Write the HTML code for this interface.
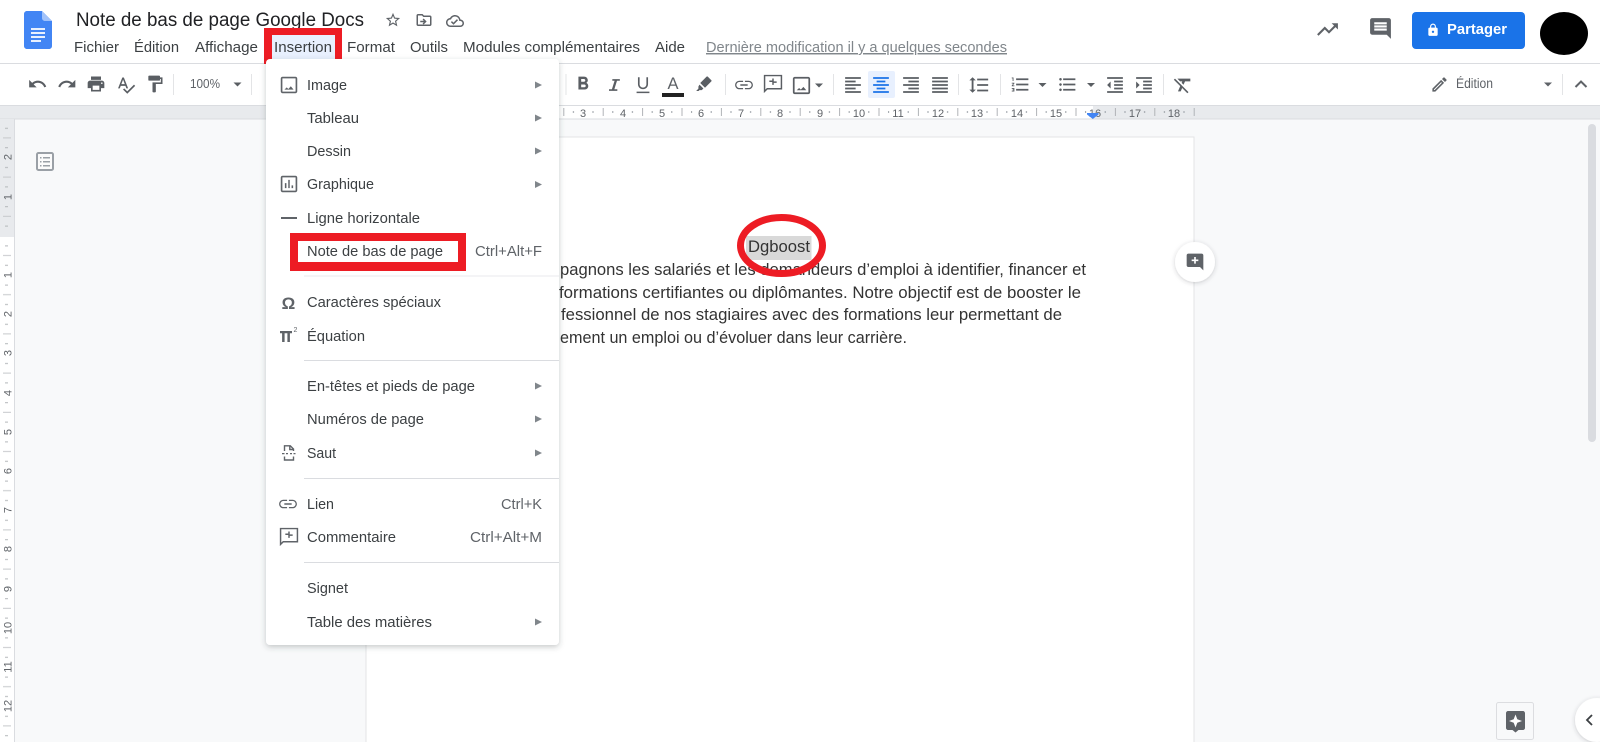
<!DOCTYPE html>
<html lang="fr">
<head>
<meta charset="utf-8">
<title>Note de bas de page Google Docs</title>
<style>
html,body{margin:0;padding:0;width:1600px;height:742px;overflow:hidden;background:#f8f9fa}
svg{display:block;position:absolute;left:0;top:0}
text{font-family:"Liberation Sans",sans-serif}
.m{font-size:14.6px;fill:#3c4043}
.i{font-size:15px;fill:#3c4043}
.s{font-size:14.6px;fill:#5f6368}
.d{font-size:16.6px;fill:#333}
.r{font-size:11px;fill:#5f6368;text-anchor:middle}
.g{fill:#5f6368}
.t{fill:#5a5e63}
</style>
</head>
<body>
<svg width="1600" height="742" viewBox="0 0 1600 742" xmlns="http://www.w3.org/2000/svg">
<defs>
<filter id="sh" x="-10%" y="-10%" width="120%" height="120%"><feDropShadow dx="0" dy="2" stdDeviation="3" flood-color="#3c4043" flood-opacity=".28"/></filter>
<filter id="sh2" x="-30%" y="-30%" width="160%" height="160%"><feDropShadow dx="0" dy="1" stdDeviation="2" flood-color="#3c4043" flood-opacity=".25"/></filter>
<pattern id="rh" x="563.3" y="105" width="39.4" height="14" patternUnits="userSpaceOnUse">
<rect x="0" y="3" width="1" height="8" fill="#b0b3b7"/><rect x="9.6" y="6" width="1" height="2" fill="#9aa0a6"/><rect x="29.2" y="6" width="1" height="2" fill="#9aa0a6"/>
</pattern>
<pattern id="rv" x="0" y="275" width="14" height="39.2" patternUnits="userSpaceOnUse">
<rect x="5" y="9.6" width="3" height="1" fill="#b4b7ba"/><rect x="3" y="19.2" width="8" height="1" fill="#c6c8cb"/><rect x="5" y="29" width="3" height="1" fill="#b4b7ba"/>
</pattern>
<symbol id="undo" viewBox="0 0 24 24"><path d="M12.5 8c-2.65 0-5.05.99-6.9 2.6L2 7v9h9l-3.62-3.62c1.39-1.16 3.16-1.88 5.12-1.88 3.54 0 6.55 2.31 7.6 5.5l2.37-.78C21.08 11.03 17.15 8 12.5 8z"/></symbol>
<symbol id="redo" viewBox="0 0 24 24"><path d="M18.4 10.6C16.55 8.99 14.15 8 11.5 8c-4.65 0-8.58 3.03-9.96 7.22L3.9 16c1.05-3.19 4.05-5.5 7.6-5.5 1.95 0 3.73.72 5.12 1.88L13 16h9V7l-3.6 3.6z"/></symbol>
<symbol id="print" viewBox="0 0 24 24"><path d="M19 8H5c-1.66 0-3 1.34-3 3v6h4v4h12v-4h4v-6c0-1.66-1.34-3-3-3zm-3 11H8v-5h8v5zm3-7c-.55 0-1-.45-1-1s.45-1 1-1 1 .45 1 1-.45 1-1 1zm-1-9H6v4h12V3z"/></symbol>
<symbol id="spell" viewBox="0 0 24 24"><path d="M12.45 16h2.09L9.43 3H7.57L2.46 16h2.09l1.12-3h5.64l1.14 3zm-6.02-5L8.5 5.48 10.57 11H6.43zm15.16.59l-8.09 8.09L9.83 16l-1.41 1.41 5.09 5.09L23 13l-1.41-1.41z"/></symbol>
<symbol id="paint" viewBox="0 0 24 24"><path d="M18 4V3c0-.55-.45-1-1-1H5c-.55 0-1 .45-1 1v4c0 .55.45 1 1 1h12c.55 0 1-.45 1-1V6h1v4H9v11c0 .55.45 1 1 1h2c.55 0 1-.45 1-1v-9h8V4h-3z"/></symbol>
<symbol id="bold" viewBox="0 0 24 24"><path d="M15.6 10.79c.97-.67 1.65-1.77 1.65-2.79 0-2.26-1.75-4-4-4H7v14h7.04c2.09 0 3.71-1.7 3.71-3.79 0-1.52-.86-2.82-2.15-3.42zM10 6.5h3c.83 0 1.5.67 1.5 1.5s-.67 1.5-1.5 1.5h-3v-3zm3.5 9H10v-3h3.5c.83 0 1.5.67 1.5 1.5s-.67 1.500-1.500 1.500z"/></symbol>
<symbol id="ital" viewBox="0 0 24 24"><path d="M10 5h9v1.900h-3.400l-3.200 10.200H16V19H6v-1.900h3.500l3.200-10.200H10z"/></symbol>
<symbol id="under" viewBox="0 0 24 24"><path d="M12 16.500c3.100 0 5.500-2.300 5.500-5.500V3.500h-1.800V11c0 2.200-1.600 3.800-3.700 3.800S8.300 13.200 8.300 11V3.500H6.500V11c0 3.200 2.400 5.500 5.500 5.500zM5 19.200v1.600h14v-1.600H5z"/></symbol>
<symbol id="link" viewBox="0 0 24 24"><path d="M3.700 12c0-1.800 1.500-3.300 3.300-3.300h4V7.300H7c-2.700 0-4.700 2.100-4.700 4.700s2 4.700 4.700 4.700h4v-1.400H7c-1.800 0-3.300-1.500-3.300-3.300zM8 12.800h8v-1.600H8v1.600zm9-5.500h-4v1.400h4c1.800 0 3.300 1.500 3.300 3.300s-1.500 3.300-3.300 3.300h-4v1.400h4c2.700 0 4.700-2.100 4.700-4.700s-2-4.700-4.700-4.700z"/></symbol>
<symbol id="addc" viewBox="0 0 24 24"><path d="M2 2h20v16H6l-4 4V2zm1.600 1.600v14.500L5.400 16.400h15V3.600H3.600zm7.600 2.400h1.600v3.200H16v1.600h-3.200V13h-1.600V9.800H8V8.200h3.200V6z"/></symbol>
<symbol id="img" viewBox="0 0 24 24"><path d="M5 3h14c1.100 0 2 .9 2 2v14c0 1.100-.9 2-2 2H5c-1.100 0-2-.9-2-2V5c0-1.100.9-2 2-2zm0 1.800c-.1 0-.2.1-.2.2v14c0 .1.1.2.2.2h14c.1 0 .2-.1.2-.2V5c0-.1-.1-.2-.2-.2H5zm9 8.600l-2.700 2.900-1.800-1.700L7 17h10l-3-3.600z"/></symbol>
<symbol id="chart" viewBox="0 0 24 24"><path d="M5 3h14c1.100 0 2 .9 2 2v14c0 1.100-.9 2-2 2H5c-1.100 0-2-.9-2-2V5c0-1.100.9-2 2-2zm0 1.800c-.1 0-.2.1-.2.2v14c0 .1.1.2.2.2h14c.1 0 .2-.1.2-.2V5c0-.1-.1-.2-.2-.2H5zM7.500 11h1.700v5.500H7.500V11zm3.700-3.500h1.600v9h-1.600v-9zm3.600 6h1.700v3h-1.700v-3z"/></symbol>
<symbol id="al" viewBox="0 0 24 24"><path d="M15 15H3v2h12v-2zm0-8H3v2h12V7zM3 13h18v-2H3v2zm0 8h18v-2H3v2zM3 3v2h18V3H3z"/></symbol>
<symbol id="ac" viewBox="0 0 24 24"><path d="M7 15v2h10v-2H7zm-4 6h18v-2H3v2zm0-8h18v-2H3v2zm4-6v2h10V7H7zM3 3v2h18V3H3z"/></symbol>
<symbol id="ar" viewBox="0 0 24 24"><path d="M3 21h18v-2H3v2zm6-4h12v-2H9v2zm-6-4h18v-2H3v2zm6-4h12V7H9v2zM3 3v2h18V3H3z"/></symbol>
<symbol id="aj" viewBox="0 0 24 24"><path d="M3 21h18v-2H3v2zm0-4h18v-2H3v2zm0-4h18v-2H3v2zm0-4h18V7H3v2zm0-6v2h18V3H3z"/></symbol>
<symbol id="ls" viewBox="0 0 24 24"><path d="M6 7h2.500L5 3.500 1.500 7H4v10H1.500L5 20.500 8.500 17H6V7zm4-2v2h12V5H10zm0 14h12v-2H10v2zm0-6h12v-2H10v2z"/></symbol>
<symbol id="nl" viewBox="0 0 24 24"><path d="M2 17h2v.5H3v1h1v.5H2v1h3v-4H2v1zm1-9h1V4H2v1h1v3zm-1 3h1.800L2 13.100v.9h3v-1H3.200L5 10.900V10H2v1zm5-6v2h14V5H7zm0 14h14v-2H7v2zm0-6h14v-2H7v2z"/></symbol>
<symbol id="bl" viewBox="0 0 24 24"><path d="M4 10.500c-.83 0-1.500.67-1.500 1.500s.67 1.500 1.500 1.500 1.500-.67 1.500-1.500-.67-1.500-1.500-1.500zm0-6c-.83 0-1.500.67-1.500 1.500S3.170 7.500 4 7.500 5.500 6.830 5.500 6 4.830 4.500 4 4.500zm0 12c-.83 0-1.500.68-1.500 1.500s.68 1.500 1.500 1.500 1.500-.68 1.500-1.500-.67-1.500-1.500-1.500zM7 19h14v-2H7v2zm0-6h14v-2H7v2zm0-8v2h14V5H7z"/></symbol>
<symbol id="id" viewBox="0 0 24 24"><path d="M11 17h10v-2H11v2zm-8-5l4 4V8l-4 4zm0 9h18v-2H3v2zM3 3v2h18V3H3zm8 6h10V7H11v2zm0 4h10v-2H11v2z"/></symbol>
<symbol id="ii" viewBox="0 0 24 24"><path d="M3 21h18v-2H3v2zM3 8v8l4-4-4-4zm8 9h10v-2H11v2zM3 3v2h18V3H3zm8 6h10V7H11v2zm0 4h10v-2H11v2z"/></symbol>
<symbol id="clr" viewBox="0 0 24 24"><path d="M3.270 5L2 6.270l6.970 6.970L6.500 19h3l1.570-3.660L16.730 21 18 19.730 3.550 5.270 3.270 5zM6 5v.18L8.820 8h2.400l-.72 1.680 2.100 2.100L14.210 8H20V5H6z"/></symbol>
<symbol id="hl" viewBox="0 0 24 24"><path d="M16.500 3.200l4.300 4.300c.4.4.4 1 0 1.400l-7.600 7.600-5.700-5.700 7.600-7.600c.4-.4 1-.4 1.400 0zM6.600 12.700l4.700 4.700-2 2H6.500l-1 1H2.600l2.700-2.800v-2.600l1.300-2.300z"/></symbol>
<symbol id="pen" viewBox="0 0 24 24"><path d="M14.060 9.020l.92.92L5.920 19H5v-.92l9.060-9.060M17.660 3c-.25 0-.51.1-.7.29l-1.830 1.830 3.750 3.750 1.830-1.830c.39-.39.39-1.020 0-1.410l-2.340-2.340c-.2-.2-.45-.29-.71-.29zm-3.600 3.190L3 17.250V21h3.750L17.810 9.940l-3.750-3.750z"/></symbol>
<symbol id="star" viewBox="0 0 24 24"><path d="M22 9.240l-7.190-.62L12 2 9.190 8.630 2 9.240l5.460 4.730L5.820 21 12 17.270 18.180 21l-1.630-7.030L22 9.240zM12 15.400l-3.760 2.270 1-4.280-3.320-2.880 4.380-.38L12 6.100l1.710 4.040 4.380.38-3.320 2.880 1 4.280L12 15.400z"/></symbol>
<symbol id="fold" viewBox="0 0 24 24"><path d="M20 6h-8l-2-2H4c-1.100 0-2 .9-2 2v12c0 1.100.9 2 2 2h16c1.100 0 2-.9 2-2V8c0-1.100-.9-2-2-2zm0 12H4V6h5.200l2 2H20v10zm-8.500-8l-1.400 1.400 1.600 1.600H7v2h4.700l-1.600 1.600 1.400 1.400 4-4-4-4z"/></symbol>
<symbol id="cloud" viewBox="0 0 24 24"><path d="M19.350 10.040C18.670 6.590 15.640 4 12 4 9.110 4 6.600 5.640 5.350 8.040 2.340 8.360 0 10.910 0 14c0 3.310 2.690 6 6 6h13c2.760 0 5-2.240 5-5 0-2.640-2.050-4.780-4.650-4.960zM19 18H6c-2.210 0-4-1.790-4-4 0-2.050 1.530-3.760 3.560-3.970l1.070-.11.5-.95C8.080 7.140 9.940 6 12 6c2.620 0 4.880 1.860 5.390 4.430l.3 1.500 1.530.11c1.560.1 2.780 1.410 2.780 2.960 0 1.650-1.350 3-3 3zm-9-3.820l-2.090-2.090L6.500 13.500 10 17l6.010-6.010-1.410-1.410z"/></symbol>
<symbol id="trend" viewBox="0 0 24 24"><path d="M16 6l2.290 2.290-4.880 4.880-4-4L2 16.590 3.410 18l6-6 4 4 6.300-6.290L22 12V6z"/></symbol>
<symbol id="cmt" viewBox="0 0 24 24"><path d="M21.990 4c0-1.100-.89-2-1.990-2H4c-1.100 0-2 .9-2 2v12c0 1.100.9 2 2 2h14l4 4-.01-18zM18 14H6v-2h12v2zm0-3H6V9h12v2zm0-3H6V6h12v2z"/></symbol>
<symbol id="lock" viewBox="0 0 24 24"><path d="M18 8h-1V6c0-2.760-2.240-5-5-5S7 3.240 7 6v2H6c-1.100 0-2 .9-2 2v10c0 1.100.9 2 2 2h12c1.100 0 2-.9 2-2V10c0-1.100-.9-2-2-2zm-6 9c-1.100 0-2-.9-2-2s.9-2 2-2 2 .9 2 2-.9 2-2 2zm3.100-9H8.900V6c0-1.710 1.390-3.100 3.100-3.100 1.710 0 3.100 1.390 3.100 3.100v2z"/></symbol>
<symbol id="plusb" viewBox="0 0 24 24"><path d="M4 2h16c1.100 0 2 .9 2 2v18l-4-4H4c-1.100 0-2-.9-2-2V4c0-1.100.9-2 2-2zm7 4v3H8v2h3v3h2v-3h3V9h-3V6h-2z"/></symbol>
</defs>

<!-- workspace -->
<rect width="1600" height="742" fill="#f8f9fa"/>

<!-- top ruler -->
<rect x="0" y="105" width="1600" height="14" fill="#e8eaed"/>
<rect x="462" y="105" width="631" height="14" fill="#fff"/>
<rect x="0" y="105" width="1600" height="1" fill="#dadce0"/>
<rect x="0" y="118.500" width="1600" height="1" fill="#dadce0"/>
<rect x="559" y="105" width="636" height="14" fill="url(#rh)"/>
<text class="r" x="583" y="117">3</text><text class="r" x="623" y="117">4</text><text class="r" x="662" y="117">5</text><text class="r" x="701" y="117">6</text><text class="r" x="741" y="117">7</text><text class="r" x="780" y="117">8</text><text class="r" x="820" y="117">9</text><text class="r" x="859" y="117">10</text><text class="r" x="898" y="117">11</text><text class="r" x="938" y="117">12</text><text class="r" x="977" y="117">13</text><text class="r" x="1017" y="117">14</text><text class="r" x="1056" y="117">15</text><text class="r" x="1095" y="117">16</text><text class="r" x="1135" y="117">17</text><text class="r" x="1174" y="117">18</text>
<path d="M1087 113h11.500v1.500l-5.700 4.500-5.800-4.500z" fill="#4285f4"/>

<!-- left ruler -->
<rect x="0" y="119" width="14" height="118" fill="#e8eaed"/>
<rect x="0" y="237" width="14" height="505" fill="#fff"/>
<rect x="14" y="119" width="1" height="623" fill="#dadce0"/>
<rect x="0" y="119" width="14" height="623" fill="url(#rv)"/>
<g>
<text class="r" x="11.500" y="157" transform="rotate(-90 11.500 157)">2</text>
<text class="r" x="11.500" y="197" transform="rotate(-90 11.500 197)">1</text>
<text class="r" x="11.500" y="275" transform="rotate(-90 11.500 275)">1</text>
<text class="r" x="11.500" y="314" transform="rotate(-90 11.500 314)">2</text>
<text class="r" x="11.500" y="353" transform="rotate(-90 11.500 353)">3</text>
<text class="r" x="11.500" y="393" transform="rotate(-90 11.500 393)">4</text>
<text class="r" x="11.500" y="432" transform="rotate(-90 11.500 432)">5</text>
<text class="r" x="11.500" y="471" transform="rotate(-90 11.500 471)">6</text>
<text class="r" x="11.500" y="510" transform="rotate(-90 11.500 510)">7</text>
<text class="r" x="11.500" y="549" transform="rotate(-90 11.500 549)">8</text>
<text class="r" x="11.500" y="589" transform="rotate(-90 11.500 589)">9</text>
<text class="r" x="11.500" y="628" transform="rotate(-90 11.500 628)">10</text>
<text class="r" x="11.500" y="667" transform="rotate(-90 11.500 667)">11</text>
<text class="r" x="11.500" y="706" transform="rotate(-90 11.500 706)">12</text>
</g>

<!-- outline icon -->
<rect x="37" y="153" width="16" height="17" rx="1.500" fill="#fbfbfb" stroke="#9aa0a6" stroke-width="2"/>
<path d="M40 157h1.500v1.500H40zM43 157h7v1.500h-7zM40 161h1.500v1.500H40zM43 161h7v1.500h-7zM40 165h1.500v1.500H40zM43 165h7v1.500h-7z" fill="#9aa0a6"/>

<!-- page -->
<rect x="366" y="137" width="828" height="620" fill="#fff" stroke="#e3e4e6" stroke-width="1"/>
<rect x="746" y="236" width="65.500" height="24" fill="#d9d9d9"/>
<text class="d" x="748" y="252" textLength="62" lengthAdjust="spacingAndGlyphs">Dgboost</text>
<text class="d" x="560" y="275" textLength="526" lengthAdjust="spacingAndGlyphs">pagnons les salariés et les demandeurs d’emploi à identifier, financer et</text>
<text class="d" x="559" y="298" textLength="522" lengthAdjust="spacingAndGlyphs">formations certifiantes ou diplômantes. Notre objectif est de booster le</text>
<text class="d" x="561" y="320" textLength="501" lengthAdjust="spacingAndGlyphs">fessionnel de nos stagiaires avec des formations leur permettant de</text>
<text class="d" x="560" y="343" textLength="347" lengthAdjust="spacingAndGlyphs">ement un emploi ou d’évoluer dans leur carrière.</text>
<ellipse cx="781.500" cy="245.500" rx="41" ry="28" fill="none" stroke="#ed1c24" stroke-width="7"/>

<!-- add comment float -->
<circle cx="1195" cy="262" r="20" fill="#fff" filter="url(#sh2)"/>
<use href="#plusb" x="1185" y="252" width="20" height="20" class="g"/>

<!-- scrollbar -->
<rect x="1588" y="124" width="8" height="318" rx="4" fill="#dadce0"/>

<!-- bottom right -->
<rect x="1496.500" y="702.500" width="37" height="37" rx="2" fill="#f8f9fa" stroke="#dcdde0"/>
<path d="M1508 711h15c1 0 2 1 2 2v15c0 1-1 2-2 2h-4.500l-3 2.500-3-2.500H1508c-1 0-2-1-2-2v-15c0-1 1-2 2-2z" fill="#5f6368"/>
<path d="M1515.500 714.500l1.800 4.700 4.700 1.800-4.700 1.800-1.800 4.700-1.800-4.700-4.700-1.800 4.700-1.800z" fill="#fff"/>
<circle cx="1597" cy="720" r="22" fill="#fff" filter="url(#sh2)"/>
<path d="M1592 715l-5 5 5 5" fill="none" stroke="#3c4043" stroke-width="1.800"/>

<!-- header -->
<rect x="0" y="0" width="1600" height="63" fill="#fff"/>
<rect x="0" y="63" width="1600" height="1" fill="#dadce0"/>
<path d="M27 11h15l10 10v25c0 1.700-1.300 3-3 3H27c-1.700 0-3-1.300-3-3V14c0-1.700 1.300-3 3-3z" fill="#4285f4"/>
<path d="M42 11l10 10h-7c-1.700 0-3-1.300-3-3z" fill="#a1c2fa"/>
<path d="M31 28h14v2H31zM31 32h14v2H31zM31 36h14v2H31zM31 40h10v2H31z" fill="#e8f0fe"/>
<text x="76" y="26" font-size="19" fill="#202124" textLength="288" lengthAdjust="spacingAndGlyphs">Note de bas de page Google Docs</text>
<use href="#star" x="384.500" y="11.500" width="17" height="17" class="g"/>
<use href="#fold" x="415" y="11" width="18" height="18" class="g"/>
<use href="#cloud" x="446" y="12" width="18" height="18" class="g"/>

<text class="m" x="74" y="52" textLength="45" lengthAdjust="spacingAndGlyphs">Fichier</text>
<text class="m" x="134" y="52" textLength="45" lengthAdjust="spacingAndGlyphs">Édition</text>
<text class="m" x="195" y="52" textLength="63" lengthAdjust="spacingAndGlyphs">Affichage</text>
<rect x="264" y="28" width="78" height="38" fill="#ed1c24"/>
<rect x="272" y="35" width="63" height="24" fill="#e8f0fe"/>
<text class="m" x="274" y="52" textLength="58" lengthAdjust="spacingAndGlyphs">Insertion</text>
<text class="m" x="347" y="52" textLength="48" lengthAdjust="spacingAndGlyphs">Format</text>
<text class="m" x="410" y="52" textLength="38" lengthAdjust="spacingAndGlyphs">Outils</text>
<text class="m" x="463" y="52" textLength="177" lengthAdjust="spacingAndGlyphs">Modules complémentaires</text>
<text class="m" x="655" y="52" textLength="30" lengthAdjust="spacingAndGlyphs">Aide</text>
<text x="706" y="52" font-size="14.600" fill="#80868b" textLength="301" lengthAdjust="spacingAndGlyphs" text-decoration="underline">Dernière modification il y a quelques secondes</text>

<use href="#trend" x="1315" y="17" width="25" height="25" class="g"/>
<use href="#cmt" x="1368" y="16" width="25" height="25" class="g"/>
<rect x="1412" y="12" width="113" height="37" rx="4" fill="#1a73e8"/>
<use href="#lock" x="1426" y="23" width="14" height="14" fill="#fff"/>
<text x="1447" y="34" font-size="15" font-weight="700" fill="#fff" textLength="60" lengthAdjust="spacingAndGlyphs">Partager</text>
<ellipse cx="1564" cy="33.500" rx="24" ry="21.500" fill="#000"/>

<!-- toolbar -->
<rect x="0" y="64" width="1600" height="41" fill="#fff"/>
<g class="t">
<use href="#undo" x="27.500" y="74" width="20" height="20"/>
<use href="#redo" x="57" y="74" width="20" height="20"/>
<use href="#print" x="86" y="74" width="20" height="20"/>
<use href="#spell" x="116" y="75" width="20" height="20"/>
<use href="#paint" x="145" y="74" width="20" height="20"/>
<rect x="173" y="74" width="1" height="21" fill="#e3e4e6"/>
<text x="190" y="88" font-size="13" fill="#5f6368" textLength="30" lengthAdjust="spacingAndGlyphs">100%</text>
<path d="M233.500 82.500h8l-4 4z"/>
<rect x="251" y="74" width="1" height="21" fill="#e3e4e6"/>
<rect x="565.500" y="74" width="1" height="21" fill="#e3e4e6"/>
<use href="#bold" x="572" y="73" width="22" height="22"/>
<use href="#ital" x="604" y="75" width="20" height="20"/>
<use href="#under" x="632" y="74" width="22" height="22"/>
<text x="673" y="89" font-size="16.500" text-anchor="middle" fill="#5f6368">A</text>
<rect x="662" y="93" width="22" height="4" fill="#222"/>
<use href="#hl" x="694" y="74" width="20" height="20"/>
<rect x="725" y="74" width="1" height="21" fill="#e3e4e6"/>
<use href="#link" x="733" y="74" width="22" height="22"/>
<use href="#addc" x="762" y="73" width="22" height="22"/>
<use href="#img" x="790" y="74" width="23" height="23"/>
<path d="M815 83.500h8l-4 4z"/>
<rect x="833" y="74" width="1" height="21" fill="#e3e4e6"/>
<use href="#al" x="842.500" y="74.500" width="21" height="21"/>
<rect x="868" y="71" width="27" height="27" rx="2" fill="#e8f0fe"/>
<use href="#ac" x="870.500" y="74.500" width="21" height="21" fill="#1a73e8"/>
<use href="#ar" x="900.500" y="74.500" width="21" height="21"/>
<use href="#aj" x="929.500" y="74.500" width="21" height="21"/>
<rect x="958" y="74" width="1" height="21" fill="#e3e4e6"/>
<use href="#ls" x="968" y="74" width="22" height="22"/>
<rect x="1000" y="74" width="1" height="21" fill="#e3e4e6"/>
<use href="#nl" x="1010" y="74" width="21" height="21"/>
<path d="M1038.500 83h8l-4 4z"/>
<use href="#bl" x="1057" y="74" width="21" height="21"/>
<path d="M1087 83h8l-4 4z"/>
<use href="#id" x="1104.500" y="74.500" width="21" height="21"/>
<use href="#ii" x="1133.500" y="74.500" width="21" height="21"/>
<rect x="1163" y="74" width="1" height="21" fill="#e3e4e6"/>
<use href="#clr" x="1172" y="74" width="22" height="22"/>
<use href="#pen" x="1430" y="75" width="19" height="19" fill="#5f6368"/>
<text x="1456" y="88" font-size="13.500" fill="#5f6368" textLength="37" lengthAdjust="spacingAndGlyphs">Édition</text>
<path d="M1544 82.500h8l-4 4z" fill="#5f6368"/>
<rect x="1562" y="74" width="1" height="21" fill="#e3e4e6"/>
<path d="M1575.500 87l5.500-5.500 5.500 5.500" fill="none" stroke="#5f6368" stroke-width="2"/>
</g>

<!-- insertion menu -->
<rect x="266" y="59" width="293" height="586" rx="4" fill="#fff" filter="url(#sh)"/>

<use href="#img" x="278" y="74" width="22" height="22" class="g"/>
<text class="i" x="307" y="90" textLength="40" lengthAdjust="spacingAndGlyphs">Image</text>
<text class="i" x="307" y="123" textLength="52" lengthAdjust="spacingAndGlyphs">Tableau</text>
<text class="i" x="307" y="156" textLength="44" lengthAdjust="spacingAndGlyphs">Dessin</text>
<use href="#chart" x="278" y="173" width="22" height="22" class="g"/>
<text class="i" x="307" y="189" textLength="67" lengthAdjust="spacingAndGlyphs">Graphique</text>
<rect x="281" y="217" width="16" height="2" fill="#5f6368"/>
<text class="i" x="307" y="223" textLength="113" lengthAdjust="spacingAndGlyphs">Ligne horizontale</text>
<rect x="290" y="233" width="176" height="38" fill="#ed1c24"/>
<rect x="298" y="241" width="160" height="21" fill="#fff"/>
<text class="i" x="307" y="256" textLength="136" lengthAdjust="spacingAndGlyphs">Note de bas de page</text>
<text class="s" x="475" y="256" textLength="67" lengthAdjust="spacingAndGlyphs">Ctrl+Alt+F</text>
<rect x="304" y="275.500" width="255" height="1" fill="#e8eaed"/>

<text x="288.500" y="309" font-size="17" font-weight="700" text-anchor="middle" fill="#5f6368">Ω</text>
<text class="i" x="307" y="307" textLength="134" lengthAdjust="spacingAndGlyphs">Caractères spéciaux</text>
<path d="M280 331h12v2.200h-2.100v8.800h-2.500v-8.800h-2.800v8.800h-2.500v-8.800H280z" fill="#5f6368"/>
<text x="295.500" y="332" font-size="7" text-anchor="middle" fill="#5f6368">2</text>
<text class="i" x="307" y="341" textLength="58" lengthAdjust="spacingAndGlyphs">Équation</text>
<rect x="304" y="360" width="255" height="1" fill="#dadce0"/>

<text class="i" x="307" y="391" textLength="168" lengthAdjust="spacingAndGlyphs">En-têtes et pieds de page</text>
<text class="i" x="307" y="424" textLength="117" lengthAdjust="spacingAndGlyphs">Numéros de page</text>
<path d="M284.500 451v-5.200h5.800l3.200 3.200v2M289.800 446v3.500h3.500M284.500 456.500v3.500h9v-3.500" fill="none" stroke="#5f6368" stroke-width="1.400"/>
<path d="M282 453h2.500v1.300H282zM286 453h2v1.300h-2zM290 453h2v1.300h-2zM293.500 453h2v1.300h-2z" fill="#5f6368"/>
<text class="i" x="307" y="458" textLength="29" lengthAdjust="spacingAndGlyphs">Saut</text>
<rect x="304" y="478" width="255" height="1" fill="#dadce0"/>

<use href="#link" x="277" y="493" width="22" height="22" class="g"/>
<text class="i" x="307" y="509" textLength="27" lengthAdjust="spacingAndGlyphs">Lien</text>
<text class="s" x="501" y="509" textLength="41" lengthAdjust="spacingAndGlyphs">Ctrl+K</text>
<use href="#addc" x="278" y="526" width="22" height="22" class="g"/>
<text class="i" x="307" y="542" textLength="89" lengthAdjust="spacingAndGlyphs">Commentaire</text>
<text class="s" x="470" y="542" textLength="72" lengthAdjust="spacingAndGlyphs">Ctrl+Alt+M</text>
<rect x="304" y="562" width="255" height="1" fill="#dadce0"/>

<text class="i" x="307" y="593" textLength="41" lengthAdjust="spacingAndGlyphs">Signet</text>
<text class="i" x="307" y="627" textLength="125" lengthAdjust="spacingAndGlyphs">Table des matières</text>

<g fill="#80868b">
<path d="M535 81.500l7 3.500-7 3.500z"/>
<path d="M535 114.500l7 3.500-7 3.500z"/>
<path d="M535 147.500l7 3.500-7 3.500z"/>
<path d="M535 181l7 3.500-7 3.500z"/>
<path d="M535 382.500l7 3.500-7 3.500z"/>
<path d="M535 415.500l7 3.500-7 3.500z"/>
<path d="M535 449.500l7 3.500-7 3.500z"/>
<path d="M535 618.500l7 3.500-7 3.500z"/>
</g>
</svg>
</body>
</html>
